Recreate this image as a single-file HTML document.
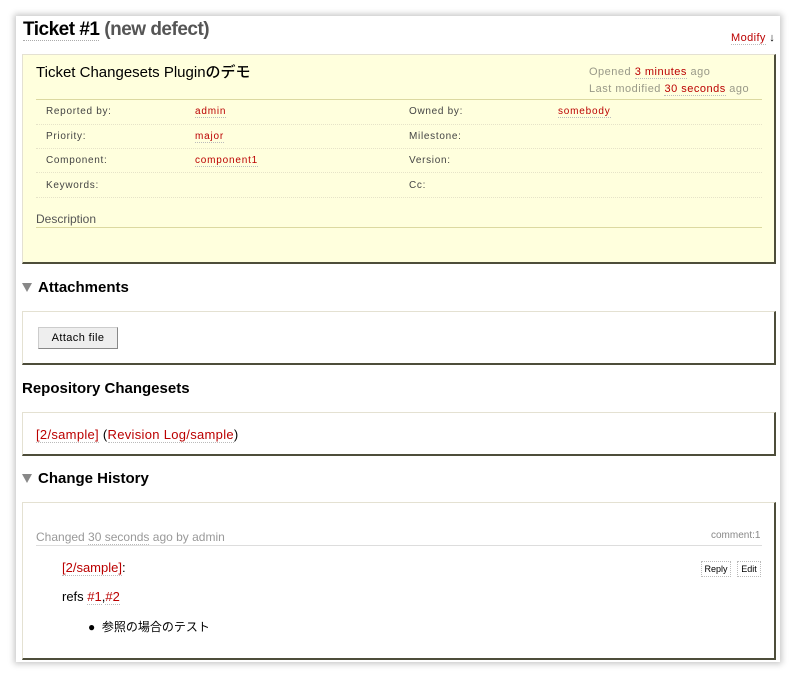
<!DOCTYPE html>
<html><head><meta charset="utf-8"><style>
*{margin:0;padding:0;box-sizing:border-box}
body{width:796px;height:679px;background:#fff;position:relative;overflow:hidden;font-family:"Liberation Sans","Noto Sans CJK JP",sans-serif;color:#000}
.a{position:absolute;white-space:nowrap}
.card{position:absolute;left:16px;top:16px;width:764px;height:646px;background:#fff;box-shadow:0 0 6px 2px rgba(0,0,0,.22)}
.box{position:absolute;left:22px;width:754px;border-top:1px solid #e4e1d2;border-left:1px solid #e4e1d2;border-right:2px solid #4d4d3a;border-bottom:2px solid #4d4d3a}
.r{color:#b00;border-bottom:1px dotted #bbb}
.lbl{font-size:10px;letter-spacing:.7px;color:#444}
.val{font-size:10px;letter-spacing:.8px;color:#b00;border-bottom:1px dotted #bbb}
.sep{position:absolute;left:36px;width:726px;border-top:1px dotted #e6e3c8;height:0}
h2{font-size:15px;font-weight:bold}
.tri{position:absolute;width:0;height:0;border-left:5px solid transparent;border-right:5px solid transparent;border-top:9px solid #888}
.btn{position:absolute;font-size:9px;border:1px dotted #bbb;background:#fff;text-align:center;line-height:14px}
</style></head><body>
<div class="card"></div>
<div class="a" style="left:23px;top:19px;font-size:19px;font-weight:bold;letter-spacing:-.5px"><span style="border-bottom:1px dotted #aaa">Ticket #1</span> <span style="color:#555">(new defect)</span></div>
<div class="a" style="left:731px;top:32px;font-size:11px;letter-spacing:.4px"><span class="r">Modify</span> ↓</div>

<div class="box" style="top:54px;height:210px;background:#ffffdd"></div>
<div class="a" style="left:36px;top:61px;font-size:15px;font-weight:500">Ticket Changesets Pluginのデモ</div>
<div class="a" style="left:589px;top:66px;font-size:11px;color:#998;letter-spacing:.5px">Opened <span class="r">3 minutes</span> ago</div>
<div class="a" style="left:589px;top:83px;font-size:11px;color:#998;letter-spacing:.5px">Last modified <span class="r">30 seconds</span> ago</div>
<div class="a" style="left:36px;top:99px;width:726px;height:1px;background:#dcd9a0"></div>

<div class="a lbl" style="left:46px;top:106px">Reported by:</div><div class="a val" style="left:195px;top:106px">admin</div>
<div class="a lbl" style="left:409px;top:106px">Owned by:</div><div class="a val" style="left:558px;top:106px">somebody</div>
<div class="sep" style="top:124px"></div>
<div class="a lbl" style="left:46px;top:131px">Priority:</div><div class="a val" style="left:195px;top:131px">major</div>
<div class="a lbl" style="left:409px;top:131px">Milestone:</div>
<div class="sep" style="top:148px"></div>
<div class="a lbl" style="left:46px;top:155px">Component:</div><div class="a val" style="left:195px;top:155px">component1</div>
<div class="a lbl" style="left:409px;top:155px">Version:</div>
<div class="sep" style="top:172px"></div>
<div class="a lbl" style="left:46px;top:180px">Keywords:</div>
<div class="a lbl" style="left:409px;top:180px">Cc:</div>
<div class="sep" style="top:197px"></div>
<div class="a" style="left:36px;top:212px;font-size:12px;color:#555">Description</div>
<div class="a" style="left:36px;top:227px;width:726px;height:1px;background:#dcd9a0"></div>

<div class="tri" style="left:22px;top:283px"></div>
<h2 class="a" style="left:38px;top:279px">Attachments</h2>
<div class="box" style="top:311px;height:54px"></div>
<div class="a" style="left:38px;top:327px;width:80px;height:22px;background:#eee;border:1px solid #ccc;border-right-color:#888;border-bottom-color:#888;font-size:11px;text-align:center;line-height:21px;letter-spacing:.4px">Attach file</div>

<h2 class="a" style="left:22px;top:380px">Repository Changesets</h2>
<div class="box" style="top:412px;height:44px"></div>
<div class="a" style="left:36px;top:427px;font-size:13px;letter-spacing:.3px"><span class="r">[2/sample]</span> (<span class="r">Revision Log/sample</span>)</div>

<div class="tri" style="left:22px;top:474px"></div>
<h2 class="a" style="left:38px;top:470px">Change History</h2>
<div class="box" style="top:502px;height:158px"></div>
<div class="a" style="left:36px;top:530px;font-size:12px;color:#999">Changed <span style="border-bottom:1px dotted #bbb">30 seconds</span> ago by admin</div>
<div class="a" style="left:711px;top:530px;font-size:10px;color:#888">comment:1</div>
<div class="a" style="left:36px;top:545px;width:726px;height:1px;background:#ddd"></div>
<div class="a" style="left:62px;top:560px;font-size:13px"><span class="r">[2/sample]</span>:</div>
<div class="btn" style="left:701px;top:561px;width:30px;height:16px">Reply</div>
<div class="btn" style="left:737px;top:561px;width:24px;height:16px">Edit</div>
<div class="a" style="left:62px;top:589px;font-size:13px">refs <span class="r">#1</span>,<span class="r">#2</span></div>
<div class="a" style="left:88px;top:618px;font-size:12px">●&nbsp;&nbsp;参照の場合のテスト</div>
</body></html>
